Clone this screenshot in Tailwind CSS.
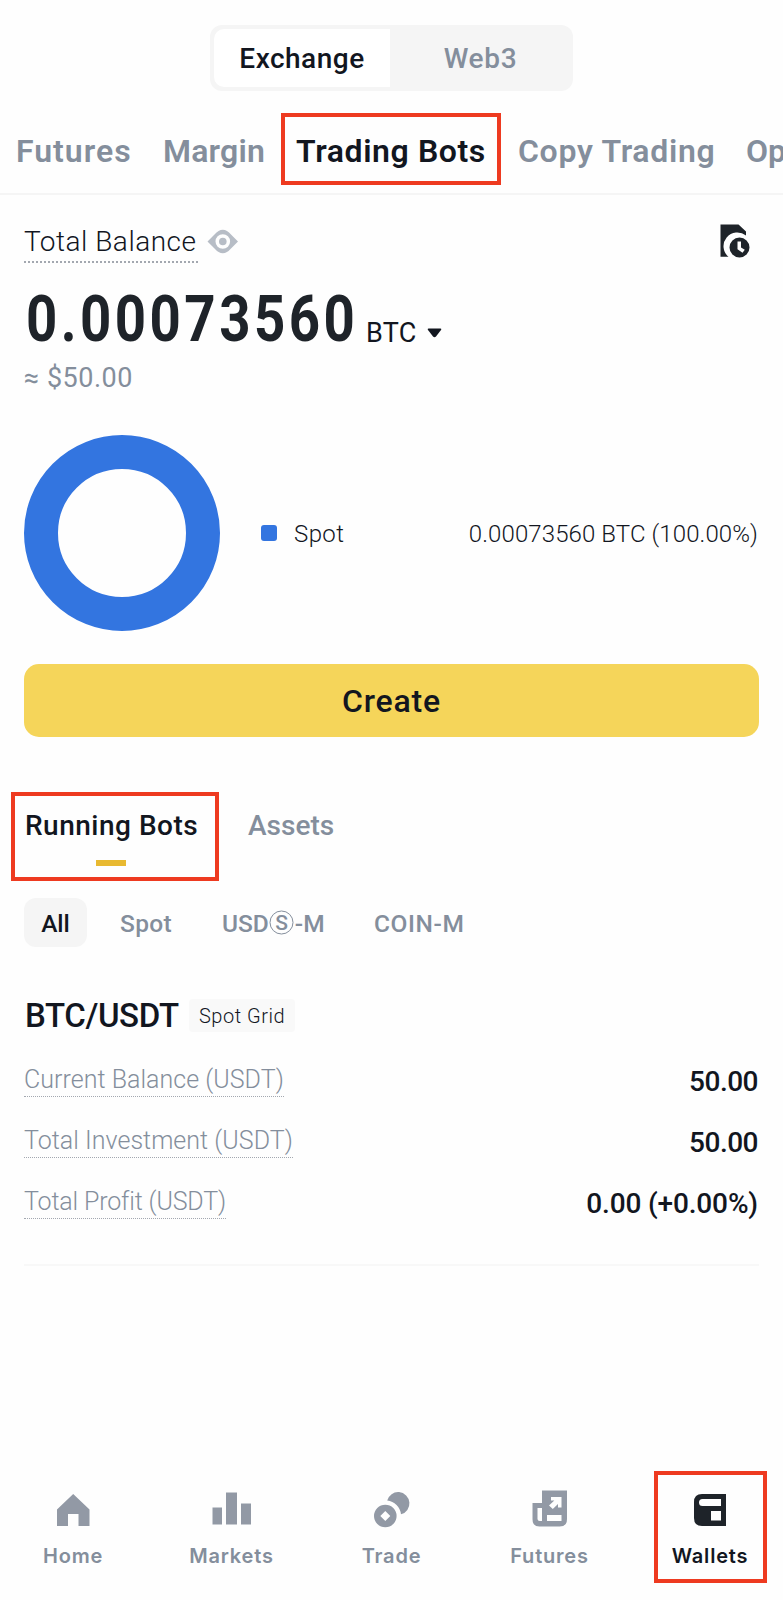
<!DOCTYPE html>
<html lang="en">

<head>
  <meta charset="UTF-8">
  <meta name="viewport" content="width=device-width, initial-scale=1.0">
  <title>Wallets - Trading Bots</title>
  <script src="https://cdn.jsdelivr.net/npm/@tailwindcss/browser@4"></script>
</head>

<body class="w-[783px] h-[1600px] overflow-hidden flex flex-col bg-[#fefefe] font-['Roboto','Liberation_Sans',sans-serif] text-[#12161f] whitespace-nowrap">

  <!-- Exchange / Web3 switch -->
  <div class="mt-[25px] ml-[210px] w-[363px] h-[66px] flex p-1 rounded-xl bg-[#f5f5f5] text-[28px] font-medium">
    <button class="w-[176px] pt-[2px] flex items-center justify-center rounded-l-[10px] bg-white tracking-[0.5px]">Exchange</button>
    <button class="grow pt-[2px] pl-[2px] flex items-center justify-center text-[#848e9c] tracking-[0.7px]">Web3</button>
  </div>

  <!-- Account tabs -->
  <nav class="pt-[22px] pb-[8px] border-b-2 border-[#f5f5f5] overflow-hidden">
    <div class="flex items-center h-[72px] pl-[16px] pt-[3px] text-[32px] leading-none font-semibold text-[#848e9c]">
      <a class="w-[147px] shrink-0 tracking-[1px]">Futures</a>
      <a class="w-[133px] shrink-0 tracking-[0.2px]">Margin</a>
      <a class="relative w-[222px] shrink-0 text-[#12161f] tracking-[0.6px]">Trading Bots
        <span class="absolute -left-[15px] -top-[22px] w-[220px] h-[72px] border-4 border-[#ee3a20]"></span>
      </a>
      <a class="w-[228px] shrink-0 tracking-[0.7px]">Copy Trading</a>
      <a class="shrink-0">Options</a>
    </div>
  </nav>

  <main class="px-[24px]">
    <!-- Balance -->
    <div class="flex items-start justify-between pt-[27px]">
      <div class="flex">
        <h2 class="w-[174px] h-[41px] text-[28px] leading-[40px] font-light tracking-[0.5px] border-b-2 border-dotted border-[#a3a8b0]">Total Balance</h2>
        <svg class="ml-[9px] mt-[7px] w-[32px] h-[25px]" viewBox="0 0 32 25" fill="#b7bdc6">
          <path fill-rule="evenodd" d="M0.500 12.500 7.500 5.500Q11.500 0.800 15.800 0.800T24 5.500L31 12.500 24 19.500Q20 24.200 15.800 24.200T7.500 19.500ZM15.800 5.200a7.300 7.300 0 1 0 0 14.600a7.300 7.300 0 1 0 0-14.600Z" />
          <circle cx="15.800" cy="12.500" r="3.800" />
        </svg>
      </div>
      <svg class="mr-[9px] mt-[2px] w-[30px] h-[34px]" viewBox="0 0 30 34" fill="#1e2329">
        <path d="M0.500 0.500H18.500L26 7.500V11.600A13.500 13.500 0 0 0 8.500 32.800H0.500Z" />
        <path fill-rule="evenodd" d="M19.500 13.500a10 10 0 1 0 0 20a10 10 0 1 0 0-20ZM17.500 17.500h3.500v6l3.800 2.200-2.300 3-5-3.500Z" />
      </svg>
    </div>
    <div class="flex h-[60px] mt-[26px] leading-[60px]">
      <div class="w-[342px] pl-[2px]">
        <span class="inline-block origin-left scale-x-[0.84] text-[65px] font-bold tracking-[4.1px] text-[#1e2329]">0.00073560</span>
      </div>
      <span class="w-[61px] pt-[14px] text-[27px] tracking-[0.3px]">BTC</span>
      <svg class="mt-[39px] w-[15px] h-[10px]" viewBox="0 0 15 10" fill="#12161f">
        <path d="M1.500 0.500H13.500Q15 0.500 14 2L9 8.500Q7.500 10 6 8.500L1 2Q0 0.500 1.500 0.500Z" />
      </svg>
    </div>
    <p class="mt-[9px] h-[40px] leading-[40px] text-[27px] text-[#848e9c] tracking-[0.5px]">≈ $50.00</p>

    <!-- Allocation -->
    <div class="flex items-center mt-[37px] h-[196px]">
      <div class="size-[196px] rounded-full border-[34px] border-[#3375e0]"></div>
      <div class="ml-[41px] size-[16px] rounded-[3px] bg-[#3375e0]"></div>
      <span class="ml-[17px] mt-[2px] text-[24px] font-light tracking-[0.4px]">Spot</span>
      <span class="ml-auto mr-px mt-[2px] text-[24px] font-light tracking-[0.1px]">0.00073560 BTC (100.00%)</span>
    </div>
    <button class="mt-[33px] w-[735px] h-[73px] rounded-[15px] bg-[#f5d55a] text-[32px] font-medium tracking-[0.8px]">Create</button>

    <!-- Running Bots / Assets -->
    <div class="flex mt-[71px] text-[28px] leading-[36px] font-medium">
      <div class="relative w-[224px] pl-px tracking-[0.5px]">Running Bots
        <div class="ml-[71px] mt-[16px] w-[30px] h-[6px] bg-[#e8b931]"></div>
        <span class="absolute -left-[13px] -top-[16px] w-[208px] h-[89px] border-4 border-[#ee3a20]"></span>
      </div>
      <div class="text-[#848e9c]">Assets</div>
    </div>

    <!-- Market filter -->
    <div class="flex mt-[32px] h-[49px] leading-[51px] text-[24.5px] font-medium text-[#848e9c]">
      <span class="w-[63px] text-center rounded-xl bg-[#f5f5f5] text-[#12161f]">All</span>
      <span class="ml-[33px] w-[102px] tracking-[0.3px]">Spot</span>
      <span class="w-[152px] flex">USD<svg class="mt-[12px] mr-px size-[25px]" viewBox="0 0 25 25"><circle cx="12.500" cy="12.500" r="11.500" fill="none" stroke="#848e9c" /><text x="12.500" y="20" text-anchor="middle" font-size="21" fill="#848e9c">S</text></svg>-M</span>
      <span class="tracking-[0.6px]">COIN-M</span>
    </div>

    <!-- Bot details -->
    <div class="flex items-center mt-[50px] h-[36px]">
      <h3 class="w-[165px] pl-px text-[33px] leading-[37px] font-medium tracking-[-0.4px]">BTC/USDT</h3>
      <span class="w-[106px] h-[33px] leading-[34px] rounded bg-[#f9f9f9] text-center text-[20px] font-light tracking-[0.5px]">Spot Grid</span>
    </div>
    <dl class="mt-[32px] pb-[45px] border-b-2 border-[#f8f8f8] text-[28px] font-medium">
      <div class="flex justify-between h-[61px]">
        <dt class="h-[32px] leading-[30px] text-[25px] font-light text-[#848e9c] border-b border-dotted border-[#a3a8b0] tracking-[0.03px]">Current Balance (USDT)</dt>
        <dd class="leading-[33px] pr-px tracking-[-0.5px]">50.00</dd>
      </div>
      <div class="flex justify-between h-[61px]">
        <dt class="h-[32px] leading-[30px] text-[25px] font-light text-[#848e9c] border-b border-dotted border-[#a3a8b0] tracking-[0.03px]">Total Investment (USDT)</dt>
        <dd class="leading-[33px] pr-px tracking-[-0.5px]">50.00</dd>
      </div>
      <div class="flex justify-between h-[32px]">
        <dt class="h-[32px] leading-[30px] text-[25px] font-light text-[#848e9c] border-b border-dotted border-[#a3a8b0] tracking-[-0.15px]">Total Profit (USDT)</dt>
        <dd class="leading-[33px] pr-px tracking-[-0.15px]">0.00 (+0.00%)</dd>
      </div>
    </dl>
  </main>

  <!-- Bottom navigation -->
  <footer class="mt-auto h-[112px] flex font-['Inter','Liberation_Sans',sans-serif] text-[20px] leading-[24px] font-semibold tracking-[0.8px] text-[#848e9c]">
    <a class="w-[146px] shrink-0 flex flex-col items-center">
      <svg class="size-[40px]" viewBox="53 1488 40 40" fill="#9299a5">
        <path d="M73.200 1494 57 1509.500V1526H68V1514H78.500V1526H89.500V1509.500Z" />
      </svg>
      <span class="mt-[16px]">Home</span>
    </a>
    <a class="w-[171px] shrink-0 flex flex-col items-center">
      <svg class="size-[40px]" viewBox="212 1487.5 40 40" fill="#9299a5">
        <path d="M212.500 1507H222V1524H212.500ZM226 1492H237V1524H226ZM241 1503H251V1524H241Z" />
      </svg>
      <span class="mt-[16px]">Markets</span>
    </a>
    <a class="w-[149px] shrink-0 flex flex-col items-center">
      <svg class="size-[40px]" viewBox="372 1488 40 40" fill="#9299a5">
        <path d="M387.200 1500.500A11.300 11.300 0 1 1 401 1514.300A15.500 15.500 0 0 0 387.200 1500.500Z" />
        <path fill-rule="evenodd" d="M385.300 1504.700a11.300 11.300 0 1 0 0 22.600a11.300 11.300 0 1 0 0-22.600ZM385.300 1511l5 5-5 5-5-5Z" />
      </svg>
      <span class="mt-[16px]">Trade</span>
    </a>
    <a class="w-[167px] shrink-0 flex flex-col items-center">
      <svg class="size-[40px]" viewBox="530 1488 40 40" fill="#9299a5">
        <path fill-rule="evenodd" d="M542 1490.500H567V1519Q567 1526.500 559.500 1526.500H539.500Q532.500 1526.500 532.500 1519V1503H542ZM537.500 1508V1519Q537.500 1521 539.800 1521H542V1508ZM547 1515V1521H561.500V1515ZM551 1497V1500.500H554.300L549 1505.500 552.800 1509 558 1504V1507.500H561.500V1497Z" />
      </svg>
      <span class="mt-[16px]">Futures</span>
    </a>
    <a class="relative w-[154px] shrink-0 flex flex-col items-center text-[#12161f]">
      <svg class="size-[40px]" viewBox="690 1488 40 40" fill="#1e2329">
        <path fill-rule="evenodd" d="M702 1494H726V1526H702Q694 1526 694 1518V1502Q694 1494 702 1494ZM702.500 1499Q699 1499 699 1502.500T702.500 1506H721V1499ZM711 1511V1520.500H721V1511Z" />
      </svg>
      <span class="mt-[16px]">Wallets</span>
      <span class="absolute left-[21px] -top-[17px] w-[113px] h-[112px] border-4 border-[#ee3a20]"></span>
    </a>
  </footer>
</body>

</html>
